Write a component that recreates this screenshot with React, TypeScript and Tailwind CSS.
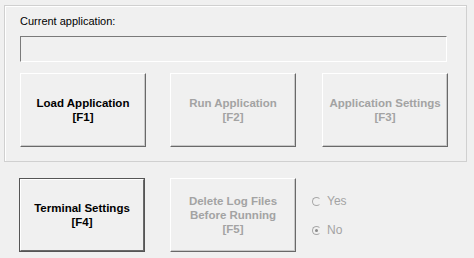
const font = { fontFamily: '"Liberation Sans", Arial, sans-serif' };

function Btn({ label, fkey, disabled }: { label: string[]; fkey: string; disabled?: boolean }) {
  return (
    <div className="w-[126px] h-[74px] border border-t-white border-l-white border-r-[#696969] border-b-[#696969] shadow-[inset_-1px_-1px_0_#c8c8c8] flex flex-col items-center justify-center leading-[14px]">
      {label.map((l) => (
        <span key={l} className={`text-[11.5px] font-bold ${disabled ? "text-[#a3a3a3]" : "text-black"}`}>{l}</span>
      ))}
      <span className={`text-[11.5px] font-bold ${disabled ? "text-[#a3a3a3]" : "text-black"}`}>{fkey}</span>
    </div>
  );
}

function Radio({ label, checked }: { label: string; checked?: boolean }) {
  return (
    <div className="flex items-center gap-[6px]">
      <span className="relative w-[9px] h-[9px] rounded-full border border-[#a8a8a8] border-r-transparent">
        {checked && <span className="absolute left-[2px] top-[2px] w-[3px] h-[3px] rounded-full bg-[#8a8a8a]" />}
      </span>
      <span className="text-[12px] text-[#a3a3a3]">{label}</span>
    </div>
  );
}

export default function App() {
  return (
    <div className="w-[474px] h-[258px] bg-[#f0f0f0] pt-[5px] pl-[4px]" style={font}>
      <div className="w-[463px] h-[157px] border border-[#d0d0d0] shadow-[inset_1px_1px_0_#fff] pl-[15px] pt-[8px]">
        <div className="text-[11px] text-black leading-[14px]">Current application:</div>
        <div className="mt-[8px] w-[427px] h-[26px] border border-t-[#7a7a7a] border-l-[#7a7a7a] border-r-white border-b-white bg-[#f0f0f0]" />
        <div className="mt-[11px] flex">
          <Btn label={["Load Application"]} fkey="[F1]" />
          <div className="w-[24px]" />
          <Btn label={["Run Application"]} fkey="[F2]" disabled />
          <div className="w-[26px]" />
          <Btn label={["Application Settings"]} fkey="[F3]" disabled />
        </div>
      </div>
      <div className="mt-[16px] ml-[15px] flex items-start">
        <div className="w-[126px] h-[74px] border border-[#555] p-0">
          <div className="w-full h-full border border-t-white border-l-white border-r-[#696969] border-b-[#696969] flex flex-col items-center justify-center leading-[14px]">
            <span className="text-[11.5px] font-bold text-black">Terminal Settings</span>
            <span className="text-[11.5px] font-bold text-black">[F4]</span>
          </div>
        </div>
        <div className="w-[25px]" />
        <Btn label={["Delete Log Files", "Before Running"]} fkey="[F5]" disabled />
        <div className="ml-[16px] mt-[14px] flex flex-col gap-[11px]">
          <Radio label="Yes" />
          <Radio label="No" checked />
        </div>
      </div>
    </div>
  );
}
